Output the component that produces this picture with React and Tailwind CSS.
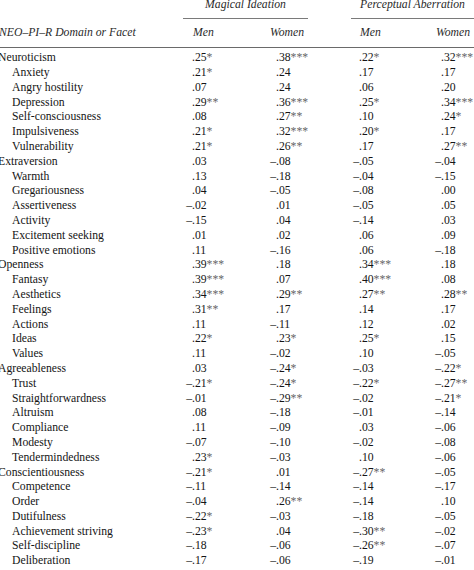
import React from "react";

const rows = [
  ["Neuroticism", 0, ".25*", ".38***", ".22*", ".32***"],
  ["Anxiety", 1, ".21*", ".24", ".17", ".17"],
  ["Angry hostility", 1, ".07", ".24", ".06", ".20"],
  ["Depression", 1, ".29**", ".36***", ".25*", ".34***"],
  ["Self-consciousness", 1, ".08", ".27**", ".10", ".24*"],
  ["Impulsiveness", 1, ".21*", ".32***", ".20*", ".17"],
  ["Vulnerability", 1, ".21*", ".26**", ".17", ".27**"],
  ["Extraversion", 0, ".03", "–.08", "–.05", "–.04"],
  ["Warmth", 1, ".13", "–.18", "–.04", "–.15"],
  ["Gregariousness", 1, ".04", "–.05", "–.08", ".00"],
  ["Assertiveness", 1, "–.02", ".01", "–.05", ".05"],
  ["Activity", 1, "–.15", ".04", "–.14", ".03"],
  ["Excitement seeking", 1, ".01", ".02", ".06", ".09"],
  ["Positive emotions", 1, ".11", "–.16", ".06", "–.18"],
  ["Openness", 0, ".39***", ".18", ".34***", ".18"],
  ["Fantasy", 1, ".39***", ".07", ".40***", ".08"],
  ["Aesthetics", 1, ".34***", ".29**", ".27**", ".28**"],
  ["Feelings", 1, ".31**", ".17", ".14", ".17"],
  ["Actions", 1, ".11", "–.11", ".12", ".02"],
  ["Ideas", 1, ".22*", ".23*", ".25*", ".15"],
  ["Values", 1, ".11", "–.02", ".10", "–.05"],
  ["Agreeableness", 0, ".03", "–.24*", "–.03", "–.22*"],
  ["Trust", 1, "–.21*", "–.24*", "–.22*", "–.27**"],
  ["Straightforwardness", 1, "–.01", "–.29**", "–.02", "–.21*"],
  ["Altruism", 1, ".08", "–.18", "–.01", "–.14"],
  ["Compliance", 1, ".11", "–.09", ".03", "–.06"],
  ["Modesty", 1, "–.07", "–.10", "–.02", "–.08"],
  ["Tendermindedness", 1, ".23*", "–.03", ".10", "–.06"],
  ["Conscientiousness", 0, "–.21*", ".01", "–.27**", "–.05"],
  ["Competence", 1, "–.11", "–.14", "–.14", "–.17"],
  ["Order", 1, "–.04", ".26**", "–.14", ".10"],
  ["Dutifulness", 1, "–.22*", "–.03", "–.18", "–.05"],
  ["Achievement striving", 1, "–.23*", ".04", "–.30**", "–.02"],
  ["Self-discipline", 1, "–.18", "–.06", "–.26**", "–.07"],
  ["Deliberation", 1, "–.17", "–.06", "–.19", "–.01"],
];

const widths = ["w-[84px]", "w-[83px]", "w-[82px]", "flex-1"];

function Val({ v, w }) {
  const neg = v.startsWith("–");
  const rest = neg ? v.slice(1) : v;
  const m = rest.match(/^([^*]*)(\**)$/);
  return (
    <div className={w + " flex"}>
      <span className="w-[6px] text-right">{neg ? "–" : ""}</span>
      <span>{m[1]}</span>
      <span className="text-[#666]">{m[2]}</span>
    </div>
  );
}

export default function App() {
  return (
    <div
      className="w-[474px] h-[570px] overflow-hidden bg-white text-[#151515] text-[11.7px] whitespace-nowrap"
      style={{ fontFamily: '"Liberation Serif", "Times New Roman", serif' }}
    >
      <div className="flex mt-[-2px] italic leading-[14px] text-[#2a2a2a]">
        <div className="w-[183px]" />
        <div className="w-[125px] text-center pb-[5.5px] border-b border-[#7a7a7a]">
          Magical Ideation
        </div>
        <div className="w-[43px]" />
        <div className="flex-1 text-center pb-[5.5px] border-b border-[#7a7a7a]">
          Perceptual Aberration
        </div>
      </div>
      <div className="flex italic leading-[14px] pt-[7px] pb-[7px] border-b-[1.5px] border-[#6a6a6a] text-[#2a2a2a]">
        <div className="w-[186px] -ml-[1px]">NEO–PI–R Domain or Facet</div>
        <div className="w-[85px] pl-[8px]">Men</div>
        <div className="w-[83px]">Women</div>
        <div className="w-[82px] pl-[7px]">Men</div>
        <div className="flex-1 pl-[1px]">Women</div>
      </div>
      <div className="pt-[3.7px]">
        {rows.map((r) => (
          <div key={r[0]} className="flex h-[14.8px] leading-[14.8px]">
            <div className="w-[186px]">
              <span className={r[1] ? "pl-[12px]" : "-ml-[2px]"}>{r[0]}</span>
            </div>
            {r.slice(2).map((v, i) => (
              <Val key={i} v={v} w={widths[i]} />
            ))}
          </div>
        ))}
      </div>
    </div>
  );
}
